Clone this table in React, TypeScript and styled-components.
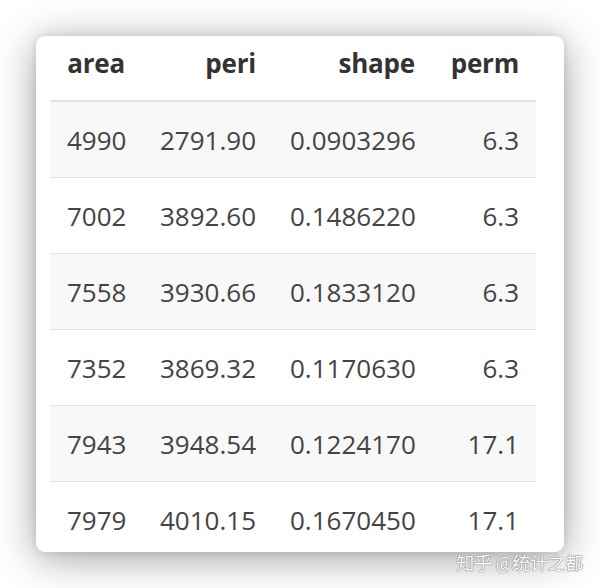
import React from "react";
import styled, { createGlobalStyle } from "styled-components";

const Global = createGlobalStyle`
  html, body { margin: 0; padding: 0; background: #ffffff; }
  body { font-family: "Open Sans", "Noto Sans", sans-serif; }
`;

const Page = styled.div`
  position: relative;
  width: 600px;
  height: 588px;
  padding: 36px 36px 0 36px;
  box-sizing: border-box;
  overflow: hidden;
  background: #ffffff;
`;

const Card = styled.div`
  width: 528px;
  height: 516px;
  box-sizing: border-box;
  padding: 0 14px;
  background: #ffffff;
  border-radius: 9px;
  box-shadow: 0 6px 40px rgba(0, 0, 0, 0.38), 0 0 8px rgba(0, 0, 0, 0.1);
  overflow: hidden;
`;

const Table = styled.table`
  width: 486px;
  border-collapse: collapse;
  table-layout: fixed;
  font-family: "Open Sans", "Noto Sans", sans-serif;
`;

const HeadCell = styled.th`
  height: 65px;
  padding: 0 17px 10px 17px;
  text-align: right;
  vertical-align: middle;
  font-size: 26px;
  font-weight: 700;
  letter-spacing: -0.2px;
  color: #333333;
  border-bottom: 2px solid #e2e2e2;
  box-sizing: border-box;
`;

const Row = styled.tr<{ $striped: boolean }>`
  background: ${(p) => (p.$striped ? "#f8f8f8" : "#ffffff")};
  border-bottom: 1px solid #e2e2e2;
`;

const Cell = styled.td`
  height: 76px;
  box-sizing: border-box;
  padding: 2px 17px 0 17px;
  text-align: right;
  vertical-align: middle;
  font-size: 26px;
  font-weight: 400;
  letter-spacing: 0;
  color: #444444;
  white-space: nowrap;
`;

const Watermark = styled.div`
  position: absolute;
  right: 17px;
  top: 549px;
  font-family: "Noto Sans CJK SC", sans-serif;
  font-size: 18px;
  letter-spacing: -0.3px;
  color: #ffffff;
  text-shadow: 0 0 1px #6a6a6a, 0 0 1px #6a6a6a;
`;

const widths = [92, 131, 159, 104];
const headers = ["area", "peri", "shape", "perm"];
const rows = [
  ["4990", "2791.90", "0.0903296", "6.3"],
  ["7002", "3892.60", "0.1486220", "6.3"],
  ["7558", "3930.66", "0.1833120", "6.3"],
  ["7352", "3869.32", "0.1170630", "6.3"],
  ["7943", "3948.54", "0.1224170", "17.1"],
  ["7979", "4010.15", "0.1670450", "17.1"],
];

export default function App() {
  return (
    <>
      <Global />
      <Page>
        <Card>
          <Table>
            <colgroup>
              {widths.map((w, i) => (
                <col key={i} style={{ width: w }} />
              ))}
            </colgroup>
            <thead>
              <tr>
                {headers.map((h) => (
                  <HeadCell key={h}>{h}</HeadCell>
                ))}
              </tr>
            </thead>
            <tbody>
              {rows.map((r, i) => (
                <Row key={i} $striped={i % 2 === 0}>
                  {r.map((c, j) => (
                    <Cell key={j}>{c}</Cell>
                  ))}
                </Row>
              ))}
            </tbody>
          </Table>
        </Card>
        <Watermark>知乎 @统计之都</Watermark>
      </Page>
    </>
  );
}
